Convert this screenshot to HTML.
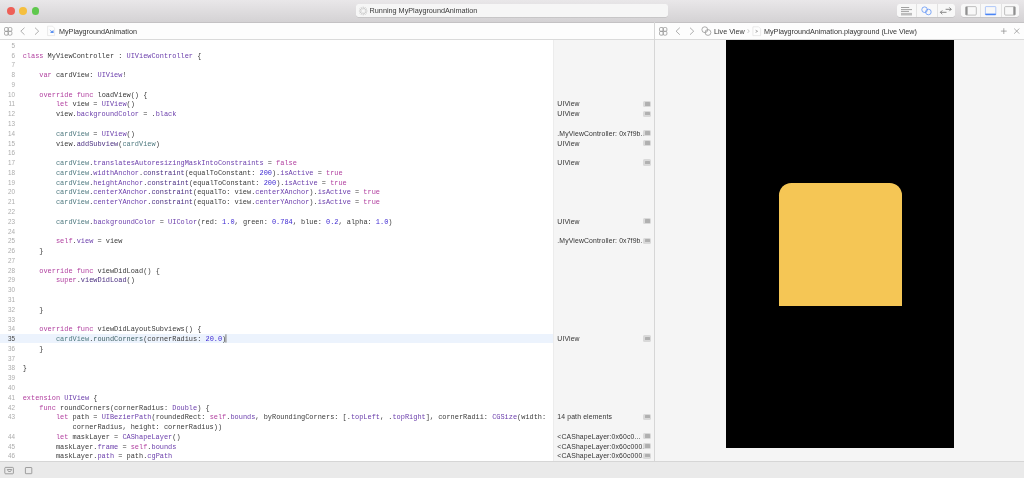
<!DOCTYPE html>
<html><head><meta charset="utf-8">
<style>
*{margin:0;padding:0;box-sizing:border-box}
html,body{width:1024px;height:478px;overflow:hidden;background:#fff;font-family:"Liberation Sans",sans-serif}
.abs{position:absolute}
#title{left:0;top:0;width:1024px;height:23px;background:linear-gradient(#e9e7e9,#d4d2d4);border-bottom:1px solid #c4c2c4}
.tl{position:absolute;top:6.9px;width:7.8px;height:7.8px;border-radius:50%}
#activity{left:356px;top:4px;width:312px;height:13px;background:#f6f6f6;border-radius:2.5px;box-shadow:0 0.5px 0.5px rgba(0,0,0,0.15)}
#activity span{filter:blur(0.3px);position:absolute;left:13.6px;top:2px;font-size:7.26px;color:#3a3a3a;line-height:10px}
.seg{position:absolute;top:4px;height:13px;background:#f8f8f8;border-radius:2.5px;box-shadow:0 0.5px 0.5px rgba(0,0,0,0.15)}
.segdiv{position:absolute;top:0;width:1px;height:13px;background:#e2e2e2}
#tabL{left:0;top:23px;width:654px;height:17px;background:#fdfdfd;border-bottom:1px solid #dadada}
#tabR{left:655px;top:23px;width:369px;height:17px;background:#fdfdfd;border-bottom:1px solid #dadada}
#vdiv{left:654px;top:22px;width:1px;height:440px;background:#d6d6d6}
.tabtxt{filter:blur(0.3px);position:absolute;top:3.7px;font-size:7.2px;line-height:10px;color:#333}
#code{left:0;top:40px;width:553px;height:421px;background:#fff;overflow:hidden;filter:blur(0.45px)}
#side{left:553px;top:40px;width:101px;height:421px;background:#f5f5f5;border-left:1px solid #ececec;overflow:hidden;filter:blur(0.3px)}
#right{left:655px;top:40px;width:369px;height:421px;background:#f5f5f5}
#live{left:725.5px;top:40px;width:228.5px;height:408px;background:#000}
#card{left:778.5px;top:182.5px;width:123px;height:123px;background:#f5c655;border-radius:12.3px 12.3px 0 0}
#bottom{left:0;top:461px;width:1024px;height:17px;background:#eaeaea;border-top:1px solid #d6d6d6}
.ln{position:absolute;left:0;width:15px;text-align:right;font-size:6.3px;color:#acacac;font-family:"Liberation Sans",sans-serif}
.cl{position:absolute;left:22.7px;white-space:pre;font-family:"Liberation Mono",monospace;font-size:6.93px;color:#3a3a3a}
.ln.cur{color:#444}.k{color:#b13f9f}.t{color:#6a3dab}.p{color:#507a80}.pf{color:#3d5f63}.f{color:#4a2f80}.n{color:#3d28d2}
.res{position:absolute;left:3.3px;font-size:6.85px;letter-spacing:0.14px;color:#333;white-space:pre}
.ql{position:absolute;left:89.3px;width:7.7px;height:6.1px;background:#d9d9d9;border-radius:1.6px}.ql i{position:absolute;left:1.7px;top:1.2px;width:4.6px;height:3.5px;background:#b0b0b0;border-radius:0.5px}
</style></head><body>
<div id="title" class="abs">
  <div class="tl" style="left:7.1px;background:#ee5f57"></div>
  <div class="tl" style="left:19.2px;background:#f5bf3f"></div>
  <div class="tl" style="left:31.5px;background:#5fc84d"></div>
</div>
<div id="activity" class="abs"><span>Running MyPlaygroundAnimation</span></div>
<div class="seg" style="left:897px;width:58px"><div class="segdiv" style="left:19.2px"></div><div class="segdiv" style="left:39.5px"></div></div>
<div class="seg" style="left:961px;width:58px"><div class="segdiv" style="left:19px"></div><div class="segdiv" style="left:39.5px"></div></div>

<div id="tabL" class="abs"><span class="tabtxt" style="left:59px">MyPlaygroundAnimation</span></div>
<div id="tabR" class="abs"><span class="tabtxt" style="left:59px">Live View</span><span class="tabtxt" style="left:109px">MyPlaygroundAnimation.playground (Live View)</span></div>

<div id="code" class="abs">
<div id="hl" style="position:absolute;left:0;top:293.90px;width:553px;height:9px;background:#ecf3fd"></div>
<div class="ln" style="top:1.77px">5</div>
<div class="ln" style="top:11.55px">6</div>
<div class="ln" style="top:21.32px">7</div>
<div class="ln" style="top:31.10px">8</div>
<div class="ln" style="top:40.88px">9</div>
<div class="ln" style="top:50.66px">10</div>
<div class="ln" style="top:60.43px">11</div>
<div class="ln" style="top:70.21px">12</div>
<div class="ln" style="top:79.99px">13</div>
<div class="ln" style="top:89.76px">14</div>
<div class="ln" style="top:99.54px">15</div>
<div class="ln" style="top:109.32px">16</div>
<div class="ln" style="top:119.09px">17</div>
<div class="ln" style="top:128.87px">18</div>
<div class="ln" style="top:138.65px">19</div>
<div class="ln" style="top:148.43px">20</div>
<div class="ln" style="top:158.20px">21</div>
<div class="ln" style="top:167.98px">22</div>
<div class="ln" style="top:177.76px">23</div>
<div class="ln" style="top:187.53px">24</div>
<div class="ln" style="top:197.31px">25</div>
<div class="ln" style="top:207.09px">26</div>
<div class="ln" style="top:216.86px">27</div>
<div class="ln" style="top:226.64px">28</div>
<div class="ln" style="top:236.42px">29</div>
<div class="ln" style="top:246.19px">30</div>
<div class="ln" style="top:255.97px">31</div>
<div class="ln" style="top:265.75px">32</div>
<div class="ln" style="top:275.53px">33</div>
<div class="ln" style="top:285.30px">34</div>
<div class="ln cur" style="top:295.08px">35</div>
<div class="ln" style="top:304.86px">36</div>
<div class="ln" style="top:314.63px">37</div>
<div class="ln" style="top:324.41px">38</div>
<div class="ln" style="top:334.19px">39</div>
<div class="ln" style="top:343.96px">40</div>
<div class="ln" style="top:353.74px">41</div>
<div class="ln" style="top:363.52px">42</div>
<div class="ln" style="top:373.30px">43</div>
<div class="ln" style="top:392.85px">44</div>
<div class="ln" style="top:402.63px">45</div>
<div class="ln" style="top:412.40px">46</div>
<div class="cl" style="top:11.55px"><span class="k">class</span> MyViewController : <span class="t">UIViewController</span> {</div>
<div class="cl" style="top:31.10px">    <span class="k">var</span> cardView: <span class="t">UIView</span>!</div>
<div class="cl" style="top:50.66px">    <span class="k">override</span> <span class="k">func</span> loadView() {</div>
<div class="cl" style="top:60.43px">        <span class="k">let</span> view = <span class="t">UIView</span>()</div>
<div class="cl" style="top:70.21px">        view.<span class="t">backgroundColor</span> = .<span class="t">black</span></div>
<div class="cl" style="top:89.76px">        <span class="p">cardView</span> = <span class="t">UIView</span>()</div>
<div class="cl" style="top:99.54px">        view.<span class="f">addSubview</span>(<span class="p">cardView</span>)</div>
<div class="cl" style="top:119.09px">        <span class="p">cardView</span>.<span class="t">translatesAutoresizingMaskIntoConstraints</span> = <span class="k">false</span></div>
<div class="cl" style="top:128.87px">        <span class="p">cardView</span>.<span class="t">widthAnchor</span>.<span class="f">constraint</span>(equalToConstant: <span class="n">200</span>).<span class="t">isActive</span> = <span class="k">true</span></div>
<div class="cl" style="top:138.65px">        <span class="p">cardView</span>.<span class="t">heightAnchor</span>.<span class="f">constraint</span>(equalToConstant: <span class="n">200</span>).<span class="t">isActive</span> = <span class="k">true</span></div>
<div class="cl" style="top:148.43px">        <span class="p">cardView</span>.<span class="t">centerXAnchor</span>.<span class="f">constraint</span>(equalTo: view.<span class="t">centerXAnchor</span>).<span class="t">isActive</span> = <span class="k">true</span></div>
<div class="cl" style="top:158.20px">        <span class="p">cardView</span>.<span class="t">centerYAnchor</span>.<span class="f">constraint</span>(equalTo: view.<span class="t">centerYAnchor</span>).<span class="t">isActive</span> = <span class="k">true</span></div>
<div class="cl" style="top:177.76px">        <span class="p">cardView</span>.<span class="t">backgroundColor</span> = <span class="t">UIColor</span>(red: <span class="n">1.0</span>, green: <span class="n">0.784</span>, blue: <span class="n">0.2</span>, alpha: <span class="n">1.0</span>)</div>
<div class="cl" style="top:197.31px">        <span class="k">self</span>.<span class="t">view</span> = view</div>
<div class="cl" style="top:207.09px">    }</div>
<div class="cl" style="top:226.64px">    <span class="k">override</span> <span class="k">func</span> viewDidLoad() {</div>
<div class="cl" style="top:236.42px">        <span class="k">super</span>.<span class="f">viewDidLoad</span>()</div>
<div class="cl" style="top:265.75px">    }</div>
<div class="cl" style="top:285.30px">    <span class="k">override</span> <span class="k">func</span> viewDidLayoutSubviews() {</div>
<div class="cl" style="top:295.08px">        <span class="p">cardView</span>.<span class="pf">roundCorners</span>(cornerRadius: <span class="n">20.0</span>)</div>
<div class="cl" style="top:304.86px">    }</div>
<div class="cl" style="top:324.41px">}</div>
<div class="cl" style="top:353.74px"><span class="k">extension</span> <span class="t">UIView</span> {</div>
<div class="cl" style="top:363.52px">    <span class="k">func</span> roundCorners(cornerRadius: <span class="t">Double</span>) {</div>
<div class="cl" style="top:373.30px">        <span class="k">let</span> path = <span class="t">UIBezierPath</span>(roundedRect: <span class="k">self</span>.<span class="t">bounds</span>, byRoundingCorners: [.<span class="t">topLeft</span>, .<span class="t">topRight</span>], cornerRadii: <span class="t">CGSize</span>(width:</div>
<div class="cl" style="top:383.07px">            cornerRadius, height: cornerRadius))</div>
<div class="cl" style="top:392.85px">        <span class="k">let</span> maskLayer = <span class="t">CAShapeLayer</span>()</div>
<div class="cl" style="top:402.63px">        maskLayer.<span class="t">frame</span> = <span class="k">self</span>.<span class="t">bounds</span></div>
<div class="cl" style="top:412.40px">        maskLayer.<span class="t">path</span> = path.<span class="t">cgPath</span></div>
</div><!--ec-->
<div id="side" class="abs">
<div class="res" style="top:60.43px">UIView</div><div class="ql" style="top:60.83px"><i></i></div>
<div class="res" style="top:70.21px">UIView</div><div class="ql" style="top:70.61px"><i></i></div>
<div class="res" style="top:89.76px">.MyViewController: 0x7f9b...</div><div class="ql" style="top:90.16px"><i></i></div>
<div class="res" style="top:99.54px">UIView</div><div class="ql" style="top:99.94px"><i></i></div>
<div class="res" style="top:119.09px">UIView</div><div class="ql" style="top:119.49px"><i></i></div>
<div class="res" style="top:177.76px">UIView</div><div class="ql" style="top:178.16px"><i></i></div>
<div class="res" style="top:197.31px">.MyViewController: 0x7f9b...</div><div class="ql" style="top:197.71px"><i></i></div>
<div class="res" style="top:295.08px">UIView</div><div class="ql" style="top:295.48px"><i></i></div>
<div class="res" style="top:373.30px">14 path elements</div><div class="ql" style="top:373.70px"><i></i></div>
<div class="res" style="top:392.85px">&lt;CAShapeLayer:0x60c0...</div><div class="ql" style="top:393.25px"><i></i></div>
<div class="res" style="top:402.63px">&lt;CAShapeLayer:0x60c000...</div><div class="ql" style="top:403.03px"><i></i></div>
<div class="res" style="top:412.40px">&lt;CAShapeLayer:0x60c000...</div><div class="ql" style="top:412.80px"><i></i></div>
</div><!--es-->
<div id="right" class="abs"></div>
<div id="live" class="abs"></div>
<div id="card" class="abs"></div>
<div id="vdiv" class="abs"></div>
<div id="bottom" class="abs"></div>
<svg id="ov" width="1024" height="478" viewBox="0 0 1024 478" style="position:absolute;left:0;top:0;pointer-events:none">
<g id="spinner" stroke="#c4c4c4" stroke-width="0.9" stroke-linecap="round"><line x1="365.50" y1="11.00" x2="367.10" y2="11.00"/><line x1="365.19" y1="12.15" x2="366.58" y2="12.95"/><line x1="364.35" y1="12.99" x2="365.15" y2="14.38"/><line x1="363.20" y1="13.30" x2="363.20" y2="14.90"/><line x1="362.05" y1="12.99" x2="361.25" y2="14.38"/><line x1="361.21" y1="12.15" x2="359.82" y2="12.95"/><line x1="360.90" y1="11.00" x2="359.30" y2="11.00"/><line x1="361.21" y1="9.85" x2="359.82" y2="9.05"/><line x1="362.05" y1="9.01" x2="361.25" y2="7.62"/><line x1="363.20" y1="8.70" x2="363.20" y2="7.10"/><line x1="364.35" y1="9.01" x2="365.15" y2="7.62"/><line x1="365.19" y1="9.85" x2="366.58" y2="9.05"/></g>
<!-- toolbar group1 -->
<g fill="none">
 <path d="M901 7.5H909.2M901 9.6H912M901 11.4H909" stroke="#8a8a8a" stroke-width="0.8"/>
 <rect x="901" y="12.9" width="11" height="2.6" fill="#bdbdbd"/>
 <circle cx="924.6" cy="9.7" r="2.8" stroke="#5b90f5" stroke-width="0.75"/>
 <circle cx="928.4" cy="12" r="2.8" stroke="#5b90f5" stroke-width="0.75"/>
 <path d="M945.6 9.3H951.2M949.3 7.4L951.2 9.3L949.3 11.2" stroke="#6a6a6a" stroke-width="0.8"/>
 <path d="M940.4 12.3H946.5M942.3 10.4L940.4 12.3L942.3 14.2" stroke="#6a6a6a" stroke-width="0.8"/>
</g>
<!-- toolbar group2 -->
<g fill="none">
 <rect x="965.6" y="6.6" width="10.7" height="8.5" rx="1" stroke="#a6a6a6" stroke-width="0.7"/>
 <rect x="965.6" y="6.8" width="2" height="8.1" fill="#8f8f8f"/>
 <rect x="985.4" y="6.6" width="10.4" height="8.4" rx="0.6" stroke="#7ea6f7" stroke-width="0.6"/>
 <rect x="985.4" y="13.6" width="10.4" height="1.4" fill="#4a85f5"/>
 <rect x="1004.6" y="6.6" width="10.7" height="8.5" rx="1" stroke="#a6a6a6" stroke-width="0.7"/>
 <rect x="1013.3" y="6.8" width="2" height="8.1" fill="#8f8f8f"/>
</g>
<!-- left tab icons -->
<g fill="none" stroke="#8c8c8c" stroke-width="0.7">
 <rect x="4.5" y="27.5" width="3.8" height="3.9" rx="1.3"/><rect x="8.1" y="27.5" width="3.8" height="3.9" rx="1.3"/>
 <rect x="4.5" y="31.3" width="3.8" height="3.9" rx="1.3"/><rect x="8.1" y="31.3" width="3.8" height="3.9" rx="1.3"/>
 <path d="M24.5 27.7L20.8 31.2L24.5 34.7"/>
 <path d="M35 27.7L38.7 31.2L35 34.7"/>
</g>
<g>
 <path d="M47.6 26.2H52.6L54.6 28.2V35.6H47.6Z" fill="#fdfdfd" stroke="#d8d8d8" stroke-width="0.5"/>
 <path d="M49.4 29.6L51.9 31.2L53.4 29.9L53.7 32.9L49.8 33L51.2 32Z" fill="#5a90f0"/>
</g>
<!-- right tab icons -->
<g fill="none" stroke="#8c8c8c" stroke-width="0.7">
 <rect x="659.5" y="27.5" width="3.8" height="3.9" rx="1.3"/><rect x="663.1" y="27.5" width="3.8" height="3.9" rx="1.3"/>
 <rect x="659.5" y="31.3" width="3.8" height="3.9" rx="1.3"/><rect x="663.1" y="31.3" width="3.8" height="3.9" rx="1.3"/>
 <path d="M679.8 27.7L676.1 31.2L679.8 34.7"/>
 <path d="M690 27.7L693.7 31.2L690 34.7"/>
 <circle cx="704.8" cy="29.7" r="2.9"/><circle cx="708" cy="32.5" r="2.9"/>
 <path d="M747.6 29.2L749.2 31.1L747.6 33" stroke="#b0b0b0" stroke-width="0.6"/>
 <path d="M1003.8 28.2V34M1000.9 31.1H1006.7" stroke="#8a8a8a" stroke-width="0.7"/>
 <path d="M1014.2 28.6L1019.2 33.6M1019.2 28.6L1014.2 33.6" stroke="#8a8a8a" stroke-width="0.7"/>
</g>
<g>
 <path d="M752.9 26.8H758.6L760.6 28.8V35.6H752.9Z" fill="#fdfdfd" stroke="#d8d8d8" stroke-width="0.5"/>
 <path d="M755.6 30.2L757.6 31.3L755.6 32.4" fill="none" stroke="#777" stroke-width="0.6"/>
</g>
<!-- bottom bar icons -->
<g fill="none" stroke="#8a8a8a" stroke-width="0.8">
 <rect x="4.8" y="467.4" width="8.6" height="6.4" rx="0.8"/>
 <path d="M7.3 469.5H11.7L10.5 471.5H8.5Z" fill="none" stroke-width="0.8"/>
 <rect x="25.4" y="467.5" width="6.4" height="6.2" rx="0.5"/>
</g>
<!-- cursor -->
<rect x="225.3" y="334.3" width="1.2" height="8.3" fill="#8e8e8e"/>
</svg>
</body></html>
